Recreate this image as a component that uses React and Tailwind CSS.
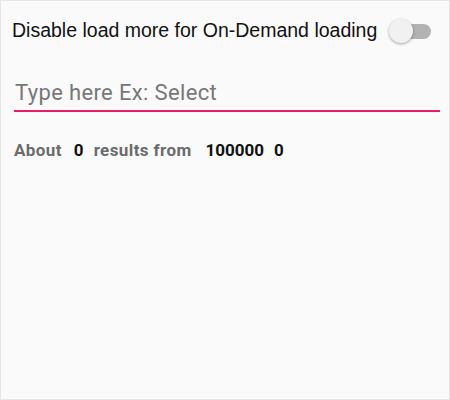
import React from "react";

export default function App() {
  return (
    <div className="w-[450px] h-[400px] bg-[#fafafa] border border-[#e4e4e4] overflow-hidden">
      <div className="flex items-center justify-between pl-[11px] pr-[18px] pt-[13px] h-[47px]">
        <span className="text-[19.5px] text-[#111] leading-none whitespace-nowrap" style={{ fontFamily: '"Liberation Sans", Arial, sans-serif' }}>
          Disable load more for On-Demand loading
        </span>
        <div className="relative w-[42px] h-[24px] flex items-center shrink-0">
          <div className="absolute left-[3px] right-[0px] h-[15px] rounded-full bg-[#b3b3b3]" />
          <div className="absolute left-0 w-[24px] h-[24px] rounded-full bg-[#f1f1f1] shadow-[0_1px_3px_rgba(0,0,0,0.35)]" />
        </div>
      </div>
      <div className="ml-[13px] mr-[9px] mt-[28px] border-b-2 border-[#e91e63] h-[36px] flex items-end pb-[6px]">
        <span className="text-[22px] tracking-[0.35px] text-[#777] leading-none pl-[1px]" style={{ fontFamily: 'Roboto, sans-serif' }}>
          Type here Ex: Select
        </span>
      </div>
      <div className="flex items-center mt-[30px] ml-[13px] text-[17px] font-bold leading-none" style={{ fontFamily: 'Roboto, sans-serif' }}>
        <span className="text-[#6b6b6b] tracking-[0.4px]">About</span>
        <span className="text-[#111] ml-[12px]">0</span>
        <span className="text-[#6b6b6b] tracking-[0.4px] ml-[10px]">results from</span>
        <span className="text-[#111] ml-[14px]">100000</span>
        <span className="text-[#111] ml-[10px]">0</span>
      </div>
    </div>
  );
}
